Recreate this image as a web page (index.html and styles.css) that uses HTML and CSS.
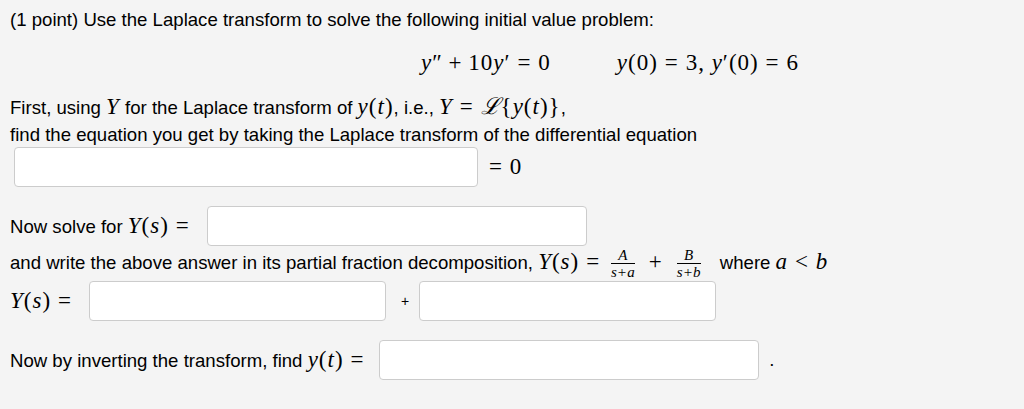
FILE: index.html
```html
<!DOCTYPE html>
<html>
<head>
<meta charset="utf-8">
<link rel="stylesheet" href="styles.css">
</head>
<body>
<div class="problem">
  <p class="line l1">(1 point) Use the Laplace transform to solve the following initial value problem:</p>
  <div class="display">
    <span class="m eq1"><i>y</i>″<span class="bin">+</span>10<i>y</i>′<span class="rel">=</span>0</span>
    <span class="m eq2"><i>y</i>(0)<span class="rel">=</span>3, <i>y</i>′(0)<span class="rel">=</span>6</span>
  </div>
  <p class="line l3">First, using <span class="m"><i>Y</i></span> for the Laplace transform of <span class="m"><i>y</i>(<i>t</i>)</span>, i.e., <span class="m"><i>Y</i><span class="rel">=</span><span class="cal">ℒ</span>{<i>y</i>(<i>t</i>)}</span>,</p>
  <p class="line l4">find the equation you get by taking the Laplace transform of the differential equation</p>
  <div class="row r1">
    <span class="box b1"></span>
    <span class="m after"><span class="rel">=</span>0</span>
  </div>
  <div class="row r2">
    <span>Now solve for <span class="m"><i>Y</i>(<i>s</i>)<span class="rel">=</span></span></span>
    <span class="box b2"></span>
  </div>
  <p class="line l5">and write the above answer in its partial fraction decomposition, <span class="m"><i>Y</i>(<i>s</i>)<span class="rel">=</span><span class="frac"><span class="num"><i>A</i></span><span class="den"><i>s</i><span class="fp">+</span><i>a</i></span></span><span class="bin">+</span><span class="frac last"><span class="num"><i>B</i></span><span class="den"><i>s</i><span class="fp">+</span><i>b</i></span></span></span> where <span class="m"><i>a</i><span class="rel">&lt;</span><i>b</i></span></p>
  <div class="row r3">
    <span class="m ys"><i>Y</i>(<i>s</i>)<span class="rel">=</span></span>
    <span class="box b3"></span>
    <span class="plus">+</span>
    <span class="box b3"></span>
  </div>
  <div class="row r4">
    <span>Now by inverting the transform, find <span class="m"><i>y</i>(<i>t</i>)<span class="rel">=</span></span></span>
    <span class="box b2"></span>
    <span class="dot">.</span>
  </div>
</div>
</body>
</html>
```
FILE: styles.css
```css
html, body {
  margin: 0;
  padding: 0;
  background: #f4f4f4;
}
body {
  font-family: "Liberation Sans", Arial, sans-serif;
  font-size: 18.6px;
  color: #000;
}
.problem {
  padding: 8px 0 0 10px;
}
.line {
  margin: 0;
  line-height: 24px;
  white-space: nowrap;
}
.m {
  font-family: "Liberation Serif", "Times New Roman", serif;
  font-size: 23px;
  letter-spacing: 1px;
}
.m i {
  font-style: italic;
}
.rel {
  margin: 0 0.3em;
}
.bin {
  margin: 0 0.25em;
}
.display {
  display: flex;
  margin: 16px 0 0 411px;
  height: 30px;
  align-items: center;
}
.eq2 {
  margin-left: 66px;
}
.l3 {
  margin-top: 17px;
}
.l4 {
  margin-top: 3px;
}
.cal {
  font-style: italic;
}
.row {
  display: flex;
  align-items: center;
  white-space: nowrap;
}
.box {
  display: inline-block;
  height: 38px;
  background: #fff;
  border: 1px solid #cccccc;
  border-radius: 4px;
  box-sizing: content-box;
}
.r1 {
  margin-top: 0;
  padding-left: 4px;
}
.b1 { width: 462px; }
.after { margin-left: 4px; }
.r2 { margin-top: 19px; }
.r2 .box { margin-left: 10px; }
.b2 { width: 378px; }
.l5 { margin-top: 2px; }
.l5 .bin { margin: 0 10px; }
.frac {
  display: inline-flex;
  flex-direction: column;
  align-items: center;
  vertical-align: middle;
  font-size: 15px;
  letter-spacing: 0;
  line-height: 14px;
  margin: 0 4px;
}
.frac.last { margin-right: 14px; }
.frac .num {
  border-bottom: 1px solid #000;
  padding: 0 3px 1px;
  align-self: stretch;
  text-align: center;
}
.frac .den { padding-top: 1px; }
.fp { margin: 0 1px; }
.r3 { margin-top: 2px; }
.ys .rel { margin-right: 17px; }
.b3 { width: 295px; }
.plus { font-size: 14px; margin: 0 10px 0 15px; }
.r4 { margin-top: 19px; }
.r4 .box { margin-left: 8px; }
.dot { margin-left: 10px; }
```
